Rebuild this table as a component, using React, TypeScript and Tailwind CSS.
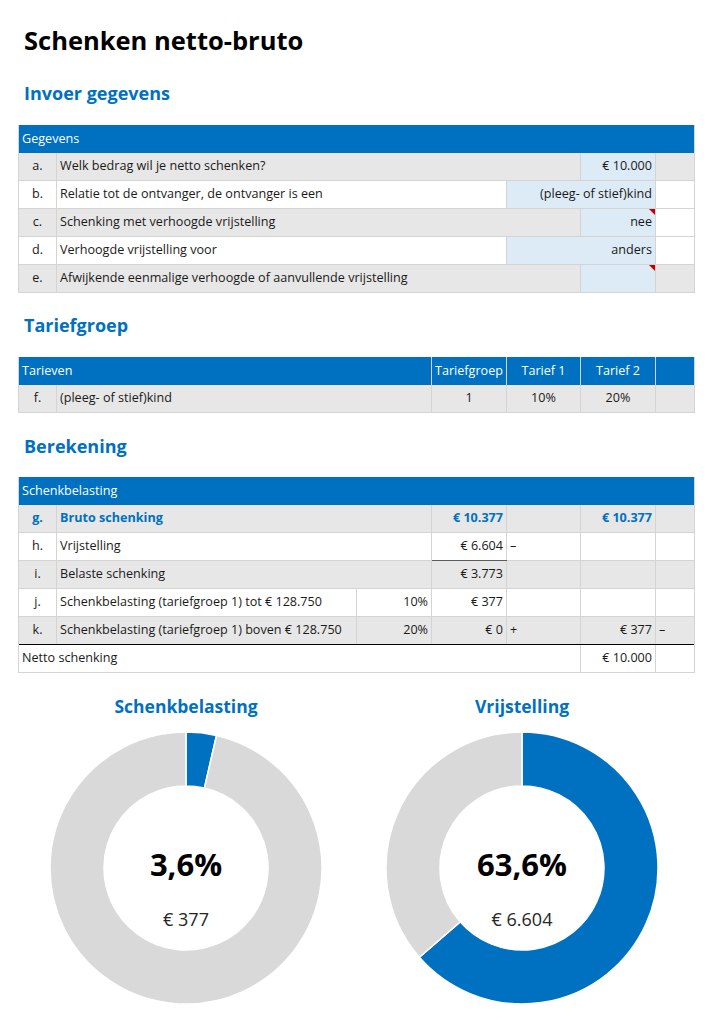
import clsx from "clsx";
import type { ReactNode } from "react";

type CellProps = {
  w: string;
  className?: string;
  children?: ReactNode;
  line?: boolean;
  align?: "l" | "r" | "c";
};

function Cell({ w, className, children, line = true, align = "l" }: CellProps) {
  return (
    <div
      className={clsx(
        "relative flex h-full shrink-0 items-center whitespace-nowrap px-[3px]",
        w,
        line && "border-r border-[#d4d4d4]",
        align === "r" && "justify-end",
        align === "c" && "justify-center",
        className
      )}
    >
      {children}
    </div>
  );
}

function Row({ gray, className, children }: { gray?: boolean; className?: string; children: ReactNode }) {
  return (
    <div className={clsx("flex h-[28px] border-b border-[#d4d4d4]", gray ? "bg-[#e7e7e7]" : "bg-white", className)}>
      {children}
    </div>
  );
}

function Head({ children }: { children: ReactNode }) {
  return <div className="flex h-[28px] bg-[#0070c0] text-white">{children}</div>;
}

// small red comment marker, top-right of a cell
const Marker = () => (
  <span className="absolute right-0 top-0 h-0 w-0 border-l-[6px] border-t-[6px] border-l-transparent border-t-[#c00000]" />
);

function Table({ children }: { children: ReactNode }) {
  return <div className="w-[677px] border-x border-[#d4d4d4] text-[12.6px]">{children}</div>;
}

function H2({ children, className }: { children: ReactNode; className?: string }) {
  return <h2 className={clsx("ml-[6px] text-[18px] font-bold leading-[24px] text-[#0070c0]", className)}>{children}</h2>;
}

function segment(c: number, R: number, r: number, a0: number, a1: number) {
  const pt = (rad: number, a: number) => `${(c + rad * Math.sin(a)).toFixed(2)} ${(c - rad * Math.cos(a)).toFixed(2)}`;
  const large = a1 - a0 > Math.PI ? 1 : 0;
  return `M ${pt(R, a0)} A ${R} ${R} 0 ${large} 1 ${pt(R, a1)} L ${pt(r, a1)} A ${r} ${r} 0 ${large} 0 ${pt(r, a0)} Z`;
}

function Donut({ title, pct, big, small }: { title: string; pct: number; big: string; small: string }) {
  const end = pct * 2 * Math.PI;
  return (
    <div className="flex flex-col items-center">
      <h3 className="text-[17.5px] font-bold leading-[24px] text-[#0070c0]">{title}</h3>
      <div className="relative mt-[12px] h-[276px] w-[276px]">
        <svg width="276" height="276" viewBox="0 0 276 276">
          <path d={segment(138, 136, 82, 0, end)} fill="#0070c0" stroke="#fff" strokeWidth="1.5" />
          <path d={segment(138, 136, 82, end, 2 * Math.PI)} fill="#d9d9d9" stroke="#fff" strokeWidth="1.5" />
        </svg>
        <div className="absolute inset-0 flex flex-col items-center pt-[116px]">
          <div className="text-[31px] font-bold leading-[36px] text-black">{big}</div>
          <div className="mt-[26px] text-[18px] leading-[22px] text-[#262626]">{small}</div>
        </div>
      </div>
    </div>
  );
}

export default function App() {
  const val = "bg-[#ddebf7]";
  const bb = "font-bold text-[#0070c0]";
  return (
    <div className="min-h-screen bg-white pl-[18px] pt-[24px] pb-6 font-['Open_Sans',sans-serif] text-[#1a1a1a]">
      <h1 className="ml-[6px] text-[25.5px] font-bold leading-[32px] text-black">Schenken netto-bruto</h1>

      <H2 className="mt-[25px]">Invoer gegevens</H2>
      <div className="mt-[20px]">
        <Table>
          <Head>
            <Cell w="w-[675px]" line={false}>Gegevens</Cell>
          </Head>
          <Row gray>
            <Cell w="w-[38px]" align="c">a.</Cell>
            <Cell w="w-[524px]">Welk bedrag wil je netto schenken?</Cell>
            <Cell w="w-[75px]" align="r" className={val}>€ 10.000</Cell>
            <Cell w="w-[38px]" line={false} />
          </Row>
          <Row>
            <Cell w="w-[38px]" align="c">b.</Cell>
            <Cell w="w-[450px]">Relatie tot de ontvanger, de ontvanger is een</Cell>
            <Cell w="w-[149px]" align="r" className={val}>(pleeg- of stief)kind</Cell>
            <Cell w="w-[38px]" line={false} />
          </Row>
          <Row gray>
            <Cell w="w-[38px]" align="c">c.</Cell>
            <Cell w="w-[524px]">Schenking met verhoogde vrijstelling</Cell>
            <Cell w="w-[75px]" align="r" className={val}>
              nee
              <Marker />
            </Cell>
            <Cell w="w-[38px]" line={false} className="bg-white" />
          </Row>
          <Row>
            <Cell w="w-[38px]" align="c">d.</Cell>
            <Cell w="w-[450px]">Verhoogde vrijstelling voor</Cell>
            <Cell w="w-[149px]" align="r" className={val}>anders</Cell>
            <Cell w="w-[38px]" line={false} />
          </Row>
          <Row gray>
            <Cell w="w-[38px]" align="c">e.</Cell>
            <Cell w="w-[524px]">Afwijkende eenmalige verhoogde of aanvullende vrijstelling</Cell>
            <Cell w="w-[75px]" align="r" className={val}>
              <Marker />
            </Cell>
            <Cell w="w-[38px]" line={false} />
          </Row>
        </Table>
      </div>

      <H2 className="mt-[20px]">Tariefgroep</H2>
      <div className="mt-[20px]">
        <Table>
          <Head>
            <Cell w="w-[413px]" className="border-[#8db7e0]">Tarieven</Cell>
            <Cell w="w-[75px]" align="c" className="border-[#8db7e0] px-0">Tariefgroep</Cell>
            <Cell w="w-[74px]" align="c" className="border-[#8db7e0]">Tarief 1</Cell>
            <Cell w="w-[75px]" align="c" className="border-[#8db7e0]">Tarief 2</Cell>
            <Cell w="w-[38px]" line={false} />
          </Head>
          <Row gray>
            <Cell w="w-[38px]" align="c">f.</Cell>
            <Cell w="w-[375px]">(pleeg- of stief)kind</Cell>
            <Cell w="w-[75px]" align="c">1</Cell>
            <Cell w="w-[74px]" align="c">10%</Cell>
            <Cell w="w-[75px]" align="c">20%</Cell>
            <Cell w="w-[38px]" line={false} />
          </Row>
        </Table>
      </div>

      <H2 className="mt-[21px]">Berekening</H2>
      <div className="mt-[19px]">
        <Table>
          <Head>
            <Cell w="w-[675px]" line={false}>Schenkbelasting</Cell>
          </Head>
          <Row gray>
            <Cell w="w-[38px]" align="c" className={bb}>g.</Cell>
            <Cell w="w-[375px]" className={bb}>Bruto schenking</Cell>
            <Cell w="w-[75px]" align="r" className={bb}>€ 10.377</Cell>
            <Cell w="w-[74px]" />
            <Cell w="w-[75px]" align="r" className={bb}>€ 10.377</Cell>
            <Cell w="w-[38px]" line={false} />
          </Row>
          <Row>
            <Cell w="w-[38px]" align="c">h.</Cell>
            <Cell w="w-[375px]">Vrijstelling</Cell>
            <Cell w="w-[75px]" align="r">
              € 6.604
              <span className="absolute -bottom-px left-0 right-[-1px] h-px bg-[#5a5a5a]" />
            </Cell>
            <Cell w="w-[74px]">–</Cell>
            <Cell w="w-[75px]" />
            <Cell w="w-[38px]" line={false} />
          </Row>
          <Row gray>
            <Cell w="w-[38px]" align="c">i.</Cell>
            <Cell w="w-[375px]">Belaste schenking</Cell>
            <Cell w="w-[75px]" align="r">€ 3.773</Cell>
            <Cell w="w-[74px]" />
            <Cell w="w-[75px]" />
            <Cell w="w-[38px]" line={false} />
          </Row>
          <Row>
            <Cell w="w-[38px]" align="c">j.</Cell>
            <Cell w="w-[300px]">Schenkbelasting (tariefgroep 1) tot € 128.750</Cell>
            <Cell w="w-[75px]" align="r">10%</Cell>
            <Cell w="w-[75px]" align="r">€ 377</Cell>
            <Cell w="w-[74px]" />
            <Cell w="w-[75px]" />
            <Cell w="w-[38px]" line={false} />
          </Row>
          <Row gray className="border-b-black">
            <Cell w="w-[38px]" align="c">k.</Cell>
            <Cell w="w-[300px]">Schenkbelasting (tariefgroep 1) boven € 128.750</Cell>
            <Cell w="w-[75px]" align="r">20%</Cell>
            <Cell w="w-[75px]" align="r">€ 0</Cell>
            <Cell w="w-[74px]">+</Cell>
            <Cell w="w-[75px]" align="r">€ 377</Cell>
            <Cell w="w-[38px]" line={false}>–</Cell>
          </Row>
          <Row>
            <Cell w="w-[562px]">Netto schenking</Cell>
            <Cell w="w-[75px]" align="r">€ 10.000</Cell>
            <Cell w="w-[38px]" line={false} />
          </Row>
        </Table>
      </div>

      <div className="mt-[21px] grid w-[672px] grid-cols-2">
        <Donut title="Schenkbelasting" pct={0.036} big="3,6%" small="€ 377" />
        <Donut title="Vrijstelling" pct={0.636} big="63,6%" small="€ 6.604" />
      </div>
    </div>
  );
}
